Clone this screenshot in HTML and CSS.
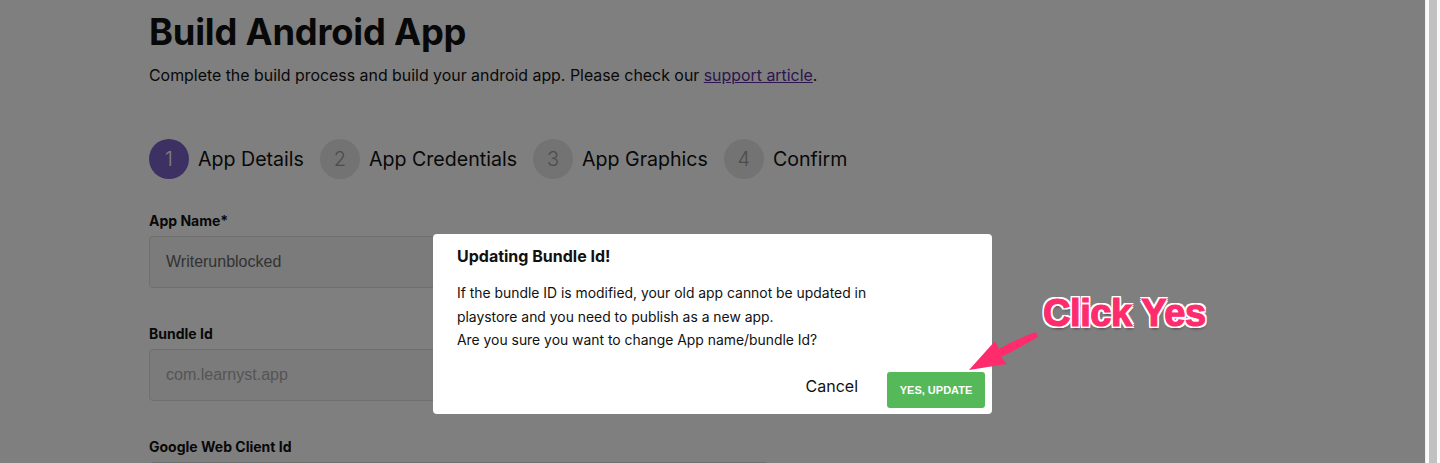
FILE: index.html
```html
<!DOCTYPE html>
<html lang="en">
<head>
    <meta charset="UTF-8">
    <title>Build Android App</title>
    <link rel="stylesheet" href="styles.css">
</head>
<body>
<div id="page">
    <div id="main">
        <div class="content">
            <h1 class="title">Build Android App</h1>
            <p class="sub">Complete the build process and build your android app. Please check our <a href="#">support article</a>.</p>

            <div class="steps">
                <div class="step active"><span class="num">1</span><span class="label">App Details</span></div>
                <div class="step"><span class="num">2</span><span class="label">App Credentials</span></div>
                <div class="step"><span class="num">3</span><span class="label">App Graphics</span></div>
                <div class="step"><span class="num">4</span><span class="label">Confirm</span></div>
            </div>

            <div class="field">
                <label class="field-label">App Name*</label>
                <div class="input">Writerunblocked</div>
            </div>
            <div class="field">
                <label class="field-label">Bundle Id</label>
                <div class="input placeholder">com.learnyst.app</div>
            </div>
            <div class="field">
                <label class="field-label">Google Web Client Id</label>
                <div class="input"></div>
            </div>
        </div>

        <!-- modal backdrop -->
        <div class="backdrop">
            <div class="modal">
                <div class="modal-title">Updating Bundle Id!</div>
                <div class="modal-body">
                    If the bundle ID is modified, your old app cannot be updated in<br>
                    playstore and you need to publish as a new app.<br>
                    Are you sure you want to change App name/bundle Id?
                </div>
                <div class="modal-foot">
                    <button type="button" class="btn-cancel">Cancel</button>
                    <button type="button" class="btn-yes">YES, UPDATE</button>
                </div>
            </div>

            <div class="callout">Click Yes</div>
            <svg class="arrow" width="80" height="50" viewBox="0 0 80 50">
                <path d="M70 5 C58 9 44 16 33 22 L29 14 L3 43 L41 37 L35 30 C46 25 58 18 72 10 Z" fill="#fe2c6d"/>
            </svg>
        </div>
    </div>
    <div id="scrollbar"><div class="thumb"></div></div>
</div>
</body>
</html>
```

FILE: styles.css
```css
* {
    box-sizing: border-box;
}

html, body {
    margin: 0;
    height: 100%;
    overflow: hidden;
}

body {
    font-family: "Inter", "Liberation Sans", sans-serif;
    color: #111;
    background: #fff;
}

#page {
    display: flex;
    height: 463px;
}

#main {
    position: relative;
    flex: 1;
    overflow: hidden;
}

.content {
    padding: 10px 0 0 149px;
}

.title {
    margin: 0;
    font-size: 36.3px;
    font-weight: 700;
    letter-spacing: -0.2px;
    line-height: 44px;
}

.sub {
    margin: 12px 0 0;
    font-size: 15.9px;
    line-height: 20px;
}

.sub a {
    color: #5b2c9e;
}

.steps {
    display: flex;
    align-items: center;
    margin-top: 53px;
}

.step {
    display: flex;
    align-items: center;
    margin-right: 16px;
}

.num {
    width: 40px;
    height: 40px;
    border-radius: 50%;
    background: #e6e6e6;
    color: #999;
    display: flex;
    align-items: center;
    justify-content: center;
    font-size: 20px;
    font-weight: 300;
    margin-right: 9px;
}

.step.active .num {
    background: #7a60c4;
    color: #fff;
}

.label {
    font-size: 19.6px;
}

.field {
    margin-top: 33px;
}

.field + .field {
    margin-top: 37px;
}

.field-label {
    display: block;
    font-size: 14px;
    font-weight: 700;
    line-height: 17px;
    margin-bottom: 7px;
}

.input {
    width: 620px;
    height: 52px;
    border: 1px solid #dedede;
    border-radius: 4px;
    background: #f6f6f6;
    padding: 0 16px;
    display: flex;
    align-items: center;
    font-family: "Liberation Sans", Arial, sans-serif;
    font-size: 16px;
    color: #666;
}

.input.placeholder {
    color: #aaa;
}

.backdrop {
    position: absolute;
    inset: 0;
    background: rgba(0, 0, 0, 0.5);
}

.modal {
    position: absolute;
    left: 433px;
    top: 234px;
    width: 559px;
    height: 180px;
    background: #fff;
    border-radius: 4px;
    padding: 12px 24px 0;
    display: flex;
    flex-direction: column;
}

.modal-title {
    font-size: 16px;
    font-weight: 700;
    line-height: 20px;
}

.modal-body {
    margin-top: 16px;
    font-size: 13.9px;
    line-height: 23.5px;
}

.modal-foot {
    display: flex;
    justify-content: flex-end;
    align-items: center;
    margin-top: 19px;
    margin-right: -17px;
}

.btn-cancel {
    border: none;
    background: none;
    font-family: inherit;
    font-size: 16px;
    color: #111;
    padding: 0 0 8px;
    margin-right: 29px;
}

.btn-yes {
    width: 98px;
    height: 36px;
    border: none;
    border-radius: 3px;
    background: #55b95a;
    color: #fff;
    font-family: "Liberation Sans", Arial, sans-serif;
    font-size: 11px;
    font-weight: 700;
}

.callout {
    position: absolute;
    left: 1043px;
    top: 292px;
    font-family: "Liberation Sans", Arial, sans-serif;
    font-size: 38px;
    font-weight: 700;
    letter-spacing: -0.4px;
    color: #fe2c6d;
    -webkit-text-stroke: 1.2px #fe2c6d;
    text-shadow: 2px 0 0 #fff, -2px 0 0 #fff, 0 2px 0 #fff, 0 -2px 0 #fff, 2px 2px 0 #fff, -2px -2px 0 #fff, 2px -2px 0 #fff, -2px 2px 0 #fff, 1px 3px 3px rgba(0, 0, 0, 0.4);
}

.arrow {
    position: absolute;
    left: 966px;
    top: 327px;
}

#scrollbar {
    width: 15px;
    background: #fafafa;
    border-left: 1px solid #eee;
    padding: 0 3px 0 3px;
}

.thumb {
    height: 100%;
    background: #c1c1c1;
}
```
